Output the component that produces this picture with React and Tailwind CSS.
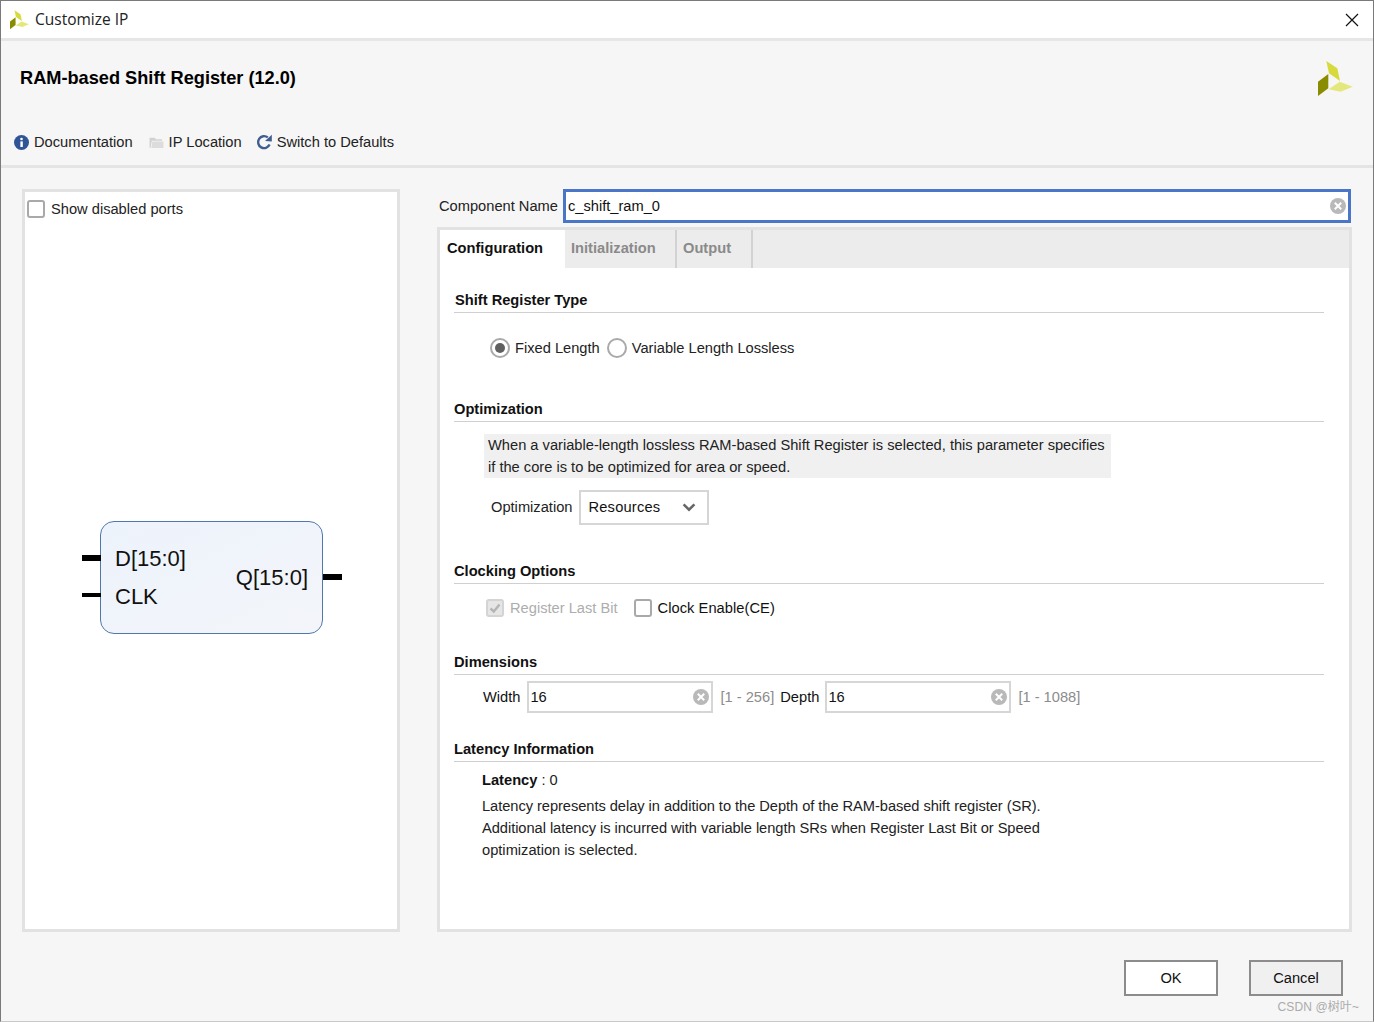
const SANS = "font-['Liberation_Sans',Arial,sans-serif]";

function Logo({ className }) {
  return (
    <svg viewBox="0 0 35 36" className={className}>
      <polygon points="8.3,0 19.3,7.3 22,20 11,12.3" fill="#d6da3c" />
      <polygon points="0,20.7 10.3,13 10.3,27.3 0,35" fill="#8a8c00" />
      <polygon points="10.5,28.3 21.7,20.7 34.7,25.7 22.7,30.7" fill="#e4e87c" />
    </svg>
  );
}

function ClearIcon() {
  return (
    <svg viewBox="0 0 16 16" className="w-4 h-4 shrink-0">
      <circle cx="8" cy="8" r="8" fill="#b9b9b9" />
      <path d="M4.8 4.8 L11.2 11.2 M11.2 4.8 L4.8 11.2" stroke="#fff" strokeWidth="2" />
    </svg>
  );
}

function Checkbox({ checked, disabled }) {
  return (
    <span
      className={`w-[18px] h-[18px] rounded-[3px] border-2 flex items-center justify-center shrink-0 ${
        disabled ? "border-[#d4d4d4] bg-[#e6e6e6]" : "border-[#a9a9a9] bg-white"
      }`}
    >
      {checked && (
        <svg viewBox="0 0 14 14" className="w-[14px] h-[14px]">
          <path d="M2.5 7.5 L5.8 10.5 L11.5 3.5" fill="none" stroke="#b4b4b4" strokeWidth="2.4" />
        </svg>
      )}
    </span>
  );
}

function Radio({ checked }) {
  return (
    <span className="w-5 h-5 rounded-full border-2 border-[#a9a9a9] bg-white flex items-center justify-center shrink-0">
      {checked && <span className="w-[10px] h-[10px] rounded-full bg-[#5f5f5f]" />}
    </span>
  );
}

function SectionTitle({ children, className = "" }) {
  return (
    <div className={`h-[25px] border-b border-[#cfcfcf] font-bold leading-[24px] ${className}`}>
      {children}
    </div>
  );
}

function NumberField({ value, className = "" }) {
  return (
    <div className={`w-[186px] h-[32px] border-2 border-[#d6d6d6] bg-white flex items-center justify-between pl-[1px] pr-[2px] ${className}`}>
      <span>{value}</span>
      <ClearIcon />
    </div>
  );
}

export default function App() {
  return (
    <div className={`relative w-[1374px] h-[1022px] flex flex-col bg-[#f6f6f6] border border-[#7a7a7a] border-b-[#c8c8c8] text-[14.67px] text-[#111] ${SANS} overflow-hidden`}>
      {/* title bar */}
      <div className="h-[37px] bg-white flex items-center shrink-0 pl-[9px] pr-[14px]">
        <Logo className="w-[19px] h-[20px]" />
        <span className="ml-[6px] font-['Open_Sans',sans-serif] text-[15.5px] text-[#222]">Customize IP</span>
        <svg viewBox="0 0 14 14" className="w-[14px] h-[14px] ml-auto">
          <path d="M1 1 L13 13 M13 1 L1 13" stroke="#111" strokeWidth="1.2" />
        </svg>
      </div>
      <div className="h-[3px] bg-[#e6e6e6] shrink-0" />

      {/* header */}
      <div className="h-[124px] shrink-0 relative border-b-[3px] border-[#e4e4e4] box-content">
        <div className="pl-[19px] pt-[25px] text-[18.2px] font-bold leading-[24px] text-black">
          RAM-based Shift Register (12.0)
        </div>
        <Logo className="absolute right-[20px] top-[20px] w-[35px] h-[36px]" />
        <div className="flex items-center mt-[42px] pl-[13px] h-[20px] text-[#222]">
          <svg viewBox="0 0 16 16" className="w-[15px] h-[15px]">
            <circle cx="8" cy="8" r="8" fill="#2f5597" />
            <circle cx="8" cy="4.2" r="1.4" fill="#fff" />
            <rect x="6.8" y="6.8" width="2.6" height="6" fill="#fff" />
          </svg>
          <span className="ml-[5px]">Documentation</span>
          <svg viewBox="0 0 16 14" className="w-[15px] h-[13px] ml-[16px]">
            <path d="M0.5 2 H6 L7.5 3.5 H14 V5 H3 L1.5 13 H0.5 Z" fill="#d2d2d2" />
            <path d="M3.5 6 H15.5 V13 H2.5 Z" fill="#dcdcdc" />
          </svg>
          <span className="ml-[5px]">IP Location</span>
          <svg viewBox="0 0 16 16" className="w-[16px] h-[16px] ml-[14px]">
            <path d="M13.6 10.6 A6 6 0 1 1 11.8 3.4" fill="none" stroke="#3f5f8f" strokeWidth="2.4" />
            <polygon points="15.8,0.8 15.8,7.6 9,7" fill="#3f5f8f" />
          </svg>
          <span className="ml-[5px]">Switch to Defaults</span>
        </div>
      </div>

      {/* main panels */}
      <div className="flex h-[743px] mt-[21px] pl-[21px] shrink-0">
        <div className="w-[378px] border-[3px] border-[#e2e2e2] bg-white">
          <div className="flex items-center gap-[6px] pl-[2px] pt-[6px] text-[#222]">
            <Checkbox />
            <span>Show disabled ports</span>
          </div>
          <div className="relative ml-[75px] mt-[301px] w-[223px] h-[113px] rounded-[14px] border border-[#4f78ad] bg-gradient-to-br from-[#edf3fc] to-[#f3f5f9] text-[22px] leading-[26px] text-[#111]">
            <span className="absolute -left-[19px] top-[33px] w-[19px] h-[6px] bg-black" />
            <span className="absolute -left-[19px] top-[71px] w-[19px] h-[4px] bg-black" />
            <span className="absolute -right-[20px] top-[52px] w-[19px] h-[6px] bg-black" />
            <span className="absolute left-[14px] top-[24px]">D[15:0]</span>
            <span className="absolute left-[14px] top-[62px]">CLK</span>
            <span className="absolute right-[14px] top-[43px]">Q[15:0]</span>
          </div>
        </div>

        <div className="ml-[37px] w-[915px] flex flex-col relative">
          <div className="absolute left-[2px] top-0 flex items-center h-[34px]">
            <span className="text-[#222]">Component Name</span>
            <div className="ml-[5px] w-[788px] h-[34px] border-[3px] border-[#4a76c8] bg-white flex items-center justify-between pl-[2px] pr-[2px]">
              <span>c_shift_ram_0</span>
              <ClearIcon />
            </div>
          </div>

          <div className="mt-[38px] h-[705px] border-[3px] border-[#e2e2e2] bg-white flex flex-col">
            {/* tabs */}
            <div className="h-[38px] bg-[#ececec] flex shrink-0 font-bold">
              <div className="w-[125px] bg-white pl-[7px] pt-[7px] text-[#111]">Configuration</div>
              <div className="w-[112px] pl-[6px] pt-[7px] text-[#8a8a8a] border-r-2 border-[#d2d2d2]">Initialization</div>
              <div className="w-[76px] pl-[6px] pt-[7px] text-[#8a8a8a] border-r-2 border-[#d2d2d2]">Output</div>
            </div>

            {/* form */}
            <div className="pl-[14px] pr-[25px] flex flex-col">
              <SectionTitle className="mt-[20px] pl-[1px]">Shift Register Type</SectionTitle>
              <div className="flex items-center mt-[25px] ml-[36px] h-[20px]">
                <Radio checked />
                <span className="ml-[5px] text-[#222]">Fixed Length</span>
                <span className="ml-[7px]"><Radio /></span>
                <span className="ml-[5px] text-[#222]">Variable Length Lossless</span>
              </div>

              <SectionTitle className="mt-[39px]">Optimization</SectionTitle>
              <div className="ml-[30px] mt-[12px] w-[627px] h-[44px] bg-[#f0f0f0] pl-[4px] leading-[22px] text-[#222]">
                When a variable-length lossless RAM-based Shift Register is selected, this parameter specifies
                <br />
                if the core is to be optimized for area or speed.
              </div>
              <div className="flex items-center ml-[37px] mt-[12px] h-[35px]">
                <span className="text-[#222] pb-[2px]">Optimization</span>
                <div className="ml-[7px] w-[130px] h-[35px] border-2 border-[#d6d6d6] bg-white flex items-center justify-between pl-[7px] pr-[11px]">
                  <span className="pb-[2px] tracking-[0.2px]">Resources</span>
                  <svg viewBox="0 0 12 8" className="w-[14px] h-[9px]">
                    <path d="M1.2 1.2 L6 6 L10.8 1.2" fill="none" stroke="#666" strokeWidth="2.2" />
                  </svg>
                </div>
              </div>

              <SectionTitle className="mt-[34px]">Clocking Options</SectionTitle>
              <div className="flex items-center ml-[32px] mt-[14px] h-[20px]">
                <Checkbox checked disabled />
                <span className="ml-[6px] text-[#adadad]">Register Last Bit</span>
                <span className="ml-[16px]"><Checkbox /></span>
                <span className="ml-[6px] tracking-[0.05px]">Clock Enable(CE)</span>
              </div>

              <SectionTitle className="mt-[32px]">Dimensions</SectionTitle>
              <div className="flex items-center ml-[29px] mt-[6px] h-[32px]">
                <span>Width</span>
                <NumberField value="16" className="ml-[7px]" />
                <span className="ml-[7px] text-[#8c8c8c]">[1 - 256]</span>
                <span className="ml-[6px]">Depth</span>
                <NumberField value="16" className="ml-[6px]" />
                <span className="ml-[7px] text-[#8c8c8c]">[1 - 1088]</span>
              </div>

              <SectionTitle className="mt-[24px]">Latency Information</SectionTitle>
              <div className="ml-[28px] mt-[7px] leading-[22px] text-[#222]">
                <div className="mb-[4px]"><b className="text-[#111]">Latency</b> : 0</div>
                <div className="tracking-[-0.05px]">Latency represents delay in addition to the Depth of the RAM-based shift register (SR).</div>
                <div className="tracking-[-0.05px]">Additional latency is incurred with variable length SRs when Register Last Bit or Speed</div>
                <div>optimization is selected.</div>
              </div>
            </div>
          </div>
        </div>
      </div>

      {/* footer */}
      <div className="flex justify-end mt-[28px] pr-[30px] gap-[31px] text-[#111]">
        <button className="w-[94px] h-[36px] border-2 border-[#8c8c8c] bg-white">OK</button>
        <button className="w-[94px] h-[36px] border-2 border-[#8c8c8c] bg-[#f0f0f0]">Cancel</button>
      </div>
      <span className="absolute right-[14px] bottom-[6px] text-[12px] leading-[16px] tracking-[0.1px] text-[#ababab] font-['Liberation_Sans','Noto_Sans_CJK_SC',sans-serif]">CSDN @树叶~</span>
    </div>
  );
}
